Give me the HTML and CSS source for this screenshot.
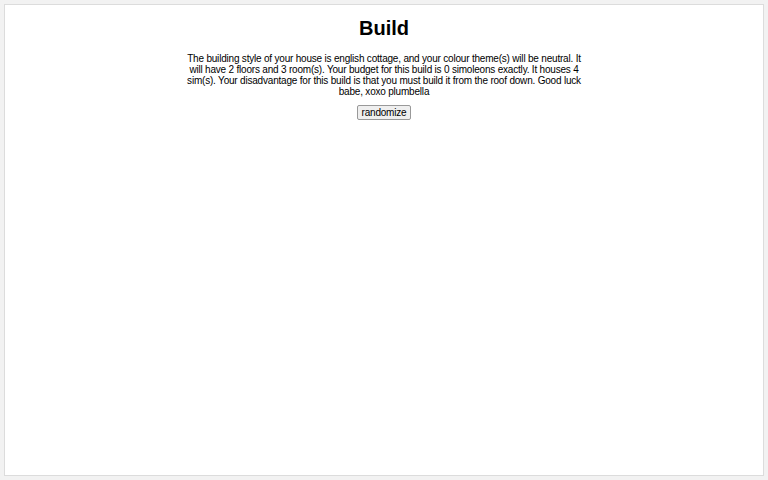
FILE: index.html
```html
<!DOCTYPE html>
<html lang="en">
<head>
    <meta charset="UTF-8">
    <meta name="viewport" content="width=device-width, initial-scale=1.0">
    <title>Build</title>
    <link rel="stylesheet" href="styles.css">
</head>
<body>
    <div class="page">
        <h1 class="title">Build</h1>
        <p class="result">The building style of your house is english cottage, and your colour theme(s) will be neutral. It will have 2 floors and 3 room(s). Your budget for this build is 0 simoleons exactly. It houses 4 sim(s). Your disadvantage for this build is that you must build it from the roof down. Good luck babe, xoxo plumbella</p>
        <button type="button" class="randomize">randomize</button>
    </div>
</body>
</html>
```

FILE: styles.css
```css
/* Page shell */
html, body {
    height: 100%;
}

body {
    margin: 0;
    padding: 4px;
    box-sizing: border-box;
    background-color: #f2f2f2;
    font-family: "Liberation Sans", Arial, sans-serif;
    color: #000;
}

.page {
    height: 100%;
    box-sizing: border-box;
    background-color: #fff;
    border: 1px solid #dcdcdc;
    display: flex;
    flex-direction: column;
    align-items: center;
    padding-top: 12px;
}

.title {
    margin: 0 0 13px;
    font-size: 20px;
    font-weight: bold;
}

.result {
    width: 400px;
    margin: 0 0 8px;
    font-size: 10px;
    letter-spacing: -0.2px;
    line-height: 11px;
    text-align: center;
}

.randomize {
    font-family: "Liberation Sans", Arial, sans-serif;
    font-size: 10px;
    letter-spacing: -0.2px;
    padding: 1px 4px;
    background-color: #efefef;
    border: 1px solid #999;
    border-radius: 2px;
    color: #000;
}
```
